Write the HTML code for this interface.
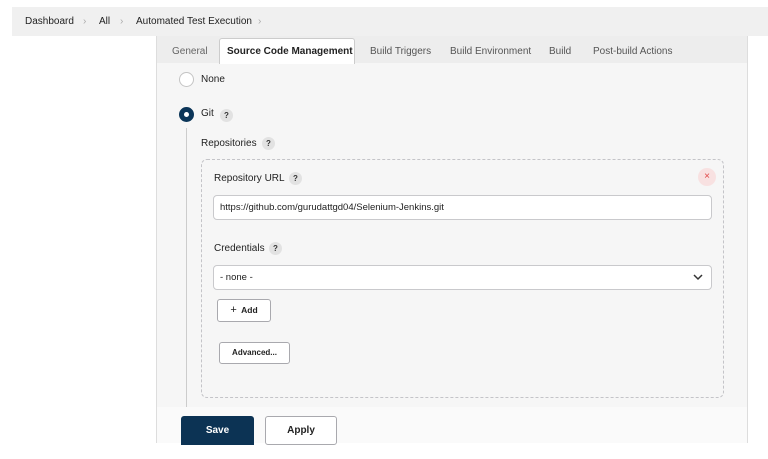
<!DOCTYPE html>
<html><head><style>
*{box-sizing:border-box;margin:0;padding:0}
body{width:768px;height:459px;background:#fff;font-family:"Liberation Sans",sans-serif;position:relative;overflow:hidden;color:#222}
.a{position:absolute}
.t{font-size:10px;line-height:12px;white-space:nowrap}
.q{position:absolute;width:13px;height:13px;border-radius:50%;background:#e2e2e2;font-size:8px;font-weight:bold;text-align:center;line-height:13px;color:#333}
.inp{position:absolute;background:#fff;border:1px solid #c9c9cc;border-radius:4px}
.btn{position:absolute;background:#fff;border:1px solid #a9a9ae;border-radius:3px;font-size:8.5px;font-weight:bold;text-align:center}
</style></head><body>
<div class="a" style="left:12px;top:7px;width:756px;height:29px;background:#f0f0f0"></div>
<div class="a t" style="left:25px;top:16px;color:#222">Dashboard</div>
<div class="a t" style="left:83px;top:16px;color:#aaa">›</div>
<div class="a t" style="left:99px;top:16px">All</div>
<div class="a t" style="left:120px;top:16px;color:#aaa">›</div>
<div class="a t" style="left:136px;top:16px">Automated Test Execution</div>
<div class="a t" style="left:258px;top:16px;color:#aaa">›</div>

<div class="a" style="left:156px;top:36px;width:592px;height:407px;background:#f6f6f6;border-left:1px solid #ddd;border-right:1px solid #ddd"></div>
<div class="a" style="left:157px;top:36px;width:590px;height:27px;background:#ededed"></div>
<div class="a" style="left:219px;top:38px;width:136px;height:26px;background:#fff;border:1px solid #ccc;border-bottom:none;border-radius:3px 3px 0 0"></div>
<div class="a t" style="left:172px;top:46px;color:#666">General</div>
<div class="a t" style="left:227px;top:46px;font-weight:bold">Source Code Management</div>
<div class="a t" style="left:370px;top:46px;color:#555">Build Triggers</div>
<div class="a t" style="left:450px;top:46px;color:#555">Build Environment</div>
<div class="a t" style="left:549px;top:46px;color:#555">Build</div>
<div class="a t" style="left:593px;top:46px;color:#555">Post-build Actions</div>

<div class="a" style="left:179px;top:72px;width:15px;height:15px;border-radius:50%;border:1.5px solid #c4c4c4;background:#fff"></div>
<div class="a t" style="left:201px;top:74px">None</div>
<div class="a" style="left:179px;top:107px;width:15px;height:15px;border-radius:50%;background:#0b3558"></div>
<div class="a" style="left:184px;top:112px;width:5px;height:5px;border-radius:50%;background:#fff"></div>
<div class="a t" style="left:201px;top:108px">Git</div>
<div class="q" style="left:220px;top:109px">?</div>
<div class="a" style="left:186px;top:128px;width:1px;height:279px;background:#ccc"></div>
<div class="a t" style="left:201px;top:138px">Repositories</div>
<div class="q" style="left:262px;top:137px">?</div>

<div class="a" style="left:201px;top:159px;width:523px;height:239px;border:1px dashed #c4c4c8;border-radius:6px"></div>
<div class="a t" style="left:214px;top:173px">Repository URL</div>
<div class="q" style="left:289px;top:172px">?</div>
<div class="a" style="left:698px;top:168px;width:18px;height:18px;border-radius:50%;background:#f8e1e1;color:#e04545;font-size:10px;text-align:center;line-height:18px">×</div>
<div class="inp" style="left:213px;top:195px;width:499px;height:25px"></div>
<div class="a t" style="left:220px;top:202px;font-size:9.5px">https://github.com/gurudattgd04/Selenium-Jenkins.git</div>
<div class="a t" style="left:214px;top:243px">Credentials</div>
<div class="q" style="left:269px;top:242px">?</div>
<div class="inp" style="left:213px;top:265px;width:499px;height:25px"></div>
<div class="a t" style="left:220px;top:272px;font-size:9.5px">- none -</div>
<svg class="a" style="left:693px;top:273px" width="10" height="8"><path d="M1 2 L5 6 L9 2" stroke="#333" stroke-width="1.5" fill="none"/></svg>
<div class="btn" style="left:217px;top:299px;width:54px;height:23px;line-height:21px"><span style="font-weight:normal;font-size:11px">+</span>&nbsp; Add</div>
<div class="btn" style="left:219px;top:342px;width:71px;height:22px;line-height:20px;font-size:8px">Advanced...</div>

<div class="a" style="left:157px;top:407px;width:590px;height:36px;background:#fafafa"></div>
<div class="a" style="left:181px;top:416px;width:73px;height:29px;background:#0c3354;border-radius:3px 3px 0 0;color:#fff;font-size:10px;font-weight:bold;text-align:center;line-height:29px">Save</div>
<div class="a" style="left:265px;top:416px;width:72px;height:29px;background:#fff;border:1px solid #a9a9ae;border-radius:3px;font-size:10px;font-weight:bold;text-align:center;line-height:27px">Apply</div>
</body></html>
